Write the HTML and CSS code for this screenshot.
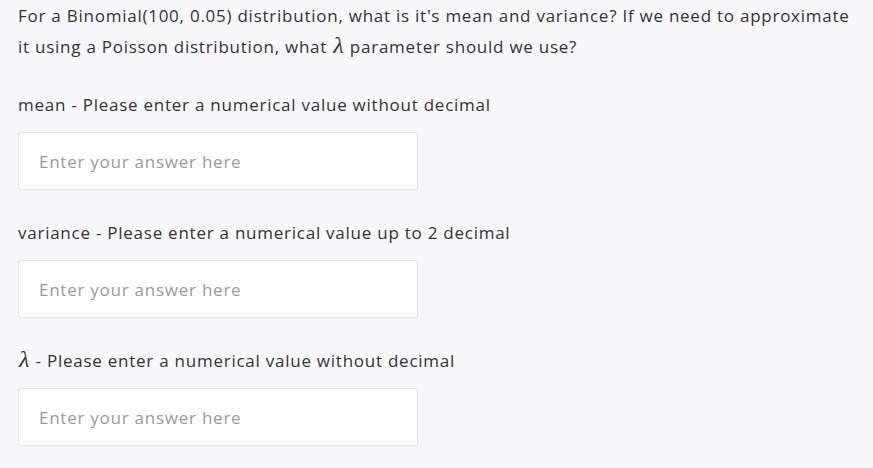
FILE: index.html
```html
<!DOCTYPE html>
<html>
<head>
<meta charset="utf-8">
<link rel="stylesheet" href="styles.css">
</head>
<body>
<div class="question">
  <p class="prompt">For a Binomial(100, 0.05) distribution, what is it's mean and variance? If we need to approximate it using a Poisson distribution, what <span class="math">λ</span> parameter should we use?</p>
  <div class="field">
    <label class="label">mean - Please enter a numerical value without decimal</label>
    <input class="answer" type="text" placeholder="Enter your answer here">
  </div>
  <div class="field">
    <label class="label">variance - Please enter a numerical value up to 2 decimal</label>
    <input class="answer" type="text" placeholder="Enter your answer here">
  </div>
  <div class="field">
    <label class="label"><span class="math">λ</span> - Please enter a numerical value without decimal</label>
    <input class="answer" type="text" placeholder="Enter your answer here">
  </div>
</div>
</body>
</html>
```
FILE: styles.css
```css
html, body {
  margin: 0;
  padding: 0;
  background: #f8f8fa;
}
body {
  font-family: "Open Sans", "Noto Sans", sans-serif;
  color: #333;
  font-size: 17px;
  letter-spacing: 0.75px;
}
.question {
  padding: 0 18px;
}
.prompt {
  margin: 0;
  line-height: 31px;
}
.math {
  display: inline-block;
  font-family: "Liberation Serif", "DejaVu Serif", serif;
  font-style: italic;
  font-size: 24px;
  line-height: 20px;
  letter-spacing: 0;
  margin: 0 1px;
}
.field {
  display: flex;
  flex-direction: column;
  align-items: flex-start;
  margin-top: 31px;
}
.label {
  line-height: 24px;
  margin-bottom: 15px;
}
.answer {
  box-sizing: border-box;
  width: 400px;
  height: 58px;
  padding: 0 20px;
  border: 1px solid #e6e6e8;
  border-radius: 2px;
  background: #fff;
  font-family: inherit;
  font-size: 17px;
  letter-spacing: 0.75px;
  color: #333;
  outline: none;
}
.answer::placeholder {
  color: #999;
}
```
